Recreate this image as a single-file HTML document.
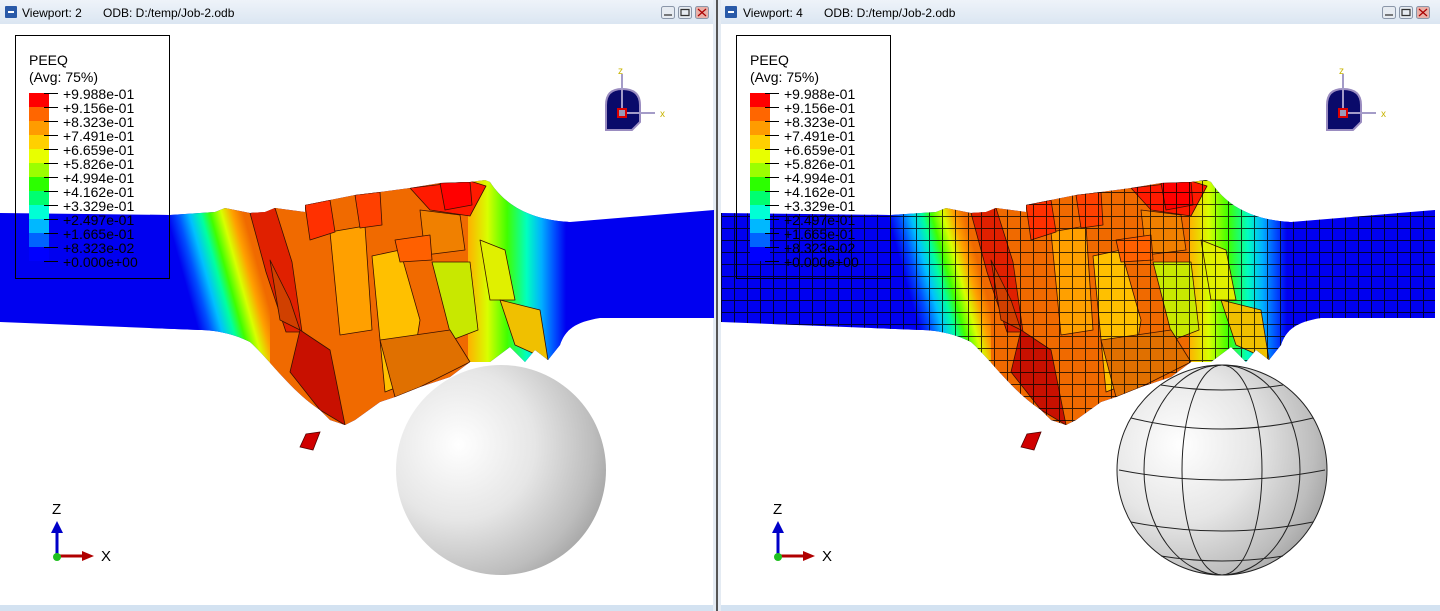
<!DOCTYPE html>
<html><head><meta charset="utf-8"><style>
html,body{margin:0;padding:0;background:#fff;}
svg{display:block;font-family:"Liberation Sans",Arial,sans-serif;}
</style></head><body>
<svg width="1440" height="611" viewBox="0 0 1440 611" xmlns="http://www.w3.org/2000/svg">
<defs>
<linearGradient id="tb" x1="0" y1="0" x2="0" y2="1"><stop offset="0" stop-color="#eef3f9"/><stop offset="1" stop-color="#dbe6f2"/></linearGradient>
<linearGradient id="gL" gradientUnits="userSpaceOnUse" x1="190" y1="300" x2="262" y2="280">
<stop offset="0" stop-color="#0000f0"/><stop offset="0.15" stop-color="#0050ff"/><stop offset="0.3" stop-color="#00c0ff"/><stop offset="0.45" stop-color="#00ffa0"/><stop offset="0.57" stop-color="#40ff00"/><stop offset="0.72" stop-color="#d8ff00"/><stop offset="0.86" stop-color="#ffa000"/><stop offset="1" stop-color="#f06a00"/></linearGradient>
<linearGradient id="gR" gradientUnits="userSpaceOnUse" x1="468" y1="0" x2="566" y2="0">
<stop offset="0" stop-color="#ffb000"/><stop offset="0.2" stop-color="#d8ff00"/><stop offset="0.4" stop-color="#40ff00"/><stop offset="0.6" stop-color="#00ffc0"/><stop offset="0.75" stop-color="#00b0ff"/><stop offset="0.88" stop-color="#0050ff"/><stop offset="1" stop-color="#0000f0"/></linearGradient>
<radialGradient id="sph" cx="0.3" cy="0.38" r="0.8"><stop offset="0" stop-color="#ffffff"/><stop offset="0.45" stop-color="#e6e6e6"/><stop offset="0.8" stop-color="#bdbdbd"/><stop offset="1" stop-color="#9a9a9a"/></radialGradient>
<clipPath id="plateClip"><path id="plateP" d="M0,213 L170,215 L200,213 L215,212 L225,208 L250,213 L265,212 L275,208 L305,212 L305,205 L330,200 L355,195 L380,192 L410,188 L440,183 L470,182 L485,180 L490,182 C505,205 530,220 570,222 L714,210 L714,318 L600,318 C575,322 565,330 560,345 L548,360 L535,350 L525,362 L510,347 L490,362 L470,362 L450,377 L420,387 L395,397 L380,402 L355,420 L345,425 L330,420 L320,410 C290,390 270,360 250,342 C230,332 210,330 200,330 L0,322 Z"/></clipPath>
<clipPath id="vp"><rect x="0" y="24" width="714" height="582"/></clipPath>
<g id="scene">
<g clip-path="url(#plateClip)">
<rect x="0" y="150" width="714" height="300" fill="#0000f0"/>
<rect x="150" y="150" width="130" height="300" fill="url(#gL)"/>
<rect x="270" y="150" width="200" height="300" fill="#f06a00"/>
<rect x="468" y="150" width="100" height="300" fill="url(#gR)"/>
<g stroke="#3a1000" stroke-width="0.8" stroke-linejoin="round">
<path d="M250,213 L275,208 L292,262 L302,332 L286,332 L266,272 Z" fill="#e02000"/>
<path d="M300,330 L330,350 L345,425 L320,410 L290,372 Z" fill="#c81000"/>
<path d="M410,188 L470,181 L486,186 L470,216 L430,210 Z" fill="#ff1a00"/>
<path d="M372,256 L400,250 L420,320 L410,382 L385,392 Z" fill="#ffc000"/>
<path d="M432,262 L470,262 L478,330 L452,340 Z" fill="#c8e800"/>
<path d="M330,232 L365,226 L372,330 L340,335 Z" fill="#ffa000"/>
<path d="M305,205 L330,200 L335,232 L310,240 Z" fill="#ff3000"/>
<path d="M355,195 L380,192 L382,225 L360,228 Z" fill="#ff4000"/>
<path d="M440,183 L470,182 L472,205 L445,210 Z" fill="#ff0000"/>
<path d="M420,210 L460,215 L465,250 L425,255 Z" fill="#f08000"/>
<path d="M480,240 L505,250 L515,300 L490,300 Z" fill="#e0f000"/>
<path d="M500,300 L540,310 L548,360 L515,345 Z" fill="#f0c000"/>
<path d="M380,340 L450,330 L470,362 L420,387 L395,397 Z" fill="#e07000"/>
<path d="M270,260 L290,300 L300,330 L280,320 Z" fill="#d04000"/>
<path d="M395,240 L430,235 L432,260 L400,262 Z" fill="#ff6000"/>
</g>
</g>
<path d="M300,447 L306,434 L320,432 L313,450 Z" fill="#d00000" stroke="#500" stroke-width="0.8"/>
<circle cx="501" cy="470" r="105" fill="url(#sph)"/>
</g>
<g id="legend">
<rect x="15.5" y="35.5" width="154" height="243" fill="none" stroke="#000" stroke-width="1"/>
<text x="29" y="65" font-size="14">PEEQ</text>
<text x="29" y="82" font-size="14">(Avg: 75%)</text>
<rect x="29" y="93" width="20" height="14" fill="#ff0000"/>
<rect x="29" y="107" width="20" height="14" fill="#ff6600"/>
<rect x="29" y="121" width="20" height="14" fill="#ff9c00"/>
<rect x="29" y="135" width="20" height="14" fill="#ffd000"/>
<rect x="29" y="149" width="20" height="14" fill="#e8ff00"/>
<rect x="29" y="163" width="20" height="14" fill="#9cff00"/>
<rect x="29" y="177" width="20" height="14" fill="#2cff00"/>
<rect x="29" y="191" width="20" height="14" fill="#00ff70"/>
<rect x="29" y="205" width="20" height="14" fill="#00ffd5"/>
<rect x="29" y="219" width="20" height="14" fill="#00b8ff"/>
<rect x="29" y="233" width="20" height="14" fill="#0064ff"/>
<rect x="29" y="247" width="20" height="14" fill="#0000ff"/>
<g stroke="#000" stroke-width="1"><path d="M44,93.5H58M44,107.5H58M44,121.5H58M44,135.5H58M44,149.5H58M44,163.5H58M44,177.5H58M44,191.5H58M44,205.5H58M44,219.5H58M44,233.5H58M44,247.5H58M44,261.5H58"/></g>
<g font-size="14">
<text x="63" y="99">+9.988e-01</text><text x="63" y="113">+9.156e-01</text><text x="63" y="127">+8.323e-01</text><text x="63" y="141">+7.491e-01</text><text x="63" y="155">+6.659e-01</text><text x="63" y="169">+5.826e-01</text><text x="63" y="183">+4.994e-01</text><text x="63" y="197">+4.162e-01</text><text x="63" y="211">+3.329e-01</text><text x="63" y="225">+2.497e-01</text><text x="63" y="239">+1.665e-01</text><text x="63" y="253">+8.323e-02</text><text x="63" y="267">+0.000e+00</text>
</g>
<path d="M606,105 Q606,89 622,89 Q640,89 640,105 L640,122 L632,130 L606,130 Z" fill="#0a0a6a" stroke="#9a8cc0" stroke-width="2"/>
<path d="M622,74 V113 H655" stroke="#a49cc8" stroke-width="2" fill="none"/>
<rect x="618" y="109" width="8" height="8" fill="#9a9ab8" stroke="#d00" stroke-width="2"/>
<text x="618" y="74" font-size="10" fill="#c8b400">z</text>
<text x="660" y="117" font-size="10" fill="#c8b400">x</text>
<path d="M57,556 V532" stroke="#0000c8" stroke-width="3"/>
<path d="M51,533 L57,521 L63,533 Z" fill="#0000c8"/>
<path d="M57,556 H83" stroke="#b00000" stroke-width="3"/>
<path d="M82,551 L94,556 L82,561 Z" fill="#b00000"/>
<circle cx="57" cy="557" r="4" fill="#20c020"/>
<text x="52" y="514" font-size="15">Z</text>
<text x="101" y="561" font-size="15">X</text>
</g>
<pattern id="mesh" patternUnits="userSpaceOnUse" width="13" height="12"><path d="M0,0.5H13M0.5,0V12" stroke="#000" stroke-width="1" opacity="0.75"/></pattern>
</defs>

<!-- frame -->
<rect width="1440" height="611" fill="#fff"/>
<rect x="0" y="0" width="1440" height="24" fill="url(#tb)"/>
<rect x="0" y="605" width="1440" height="6" fill="#d3e2f1"/>
<rect x="713" y="0" width="8" height="611" fill="#e4ebf3"/>
<rect x="716" y="0" width="2" height="611" fill="#555"/>

<!-- left panel -->
<g clip-path="url(#vp)"><use href="#scene"/><use href="#legend"/></g>
<!-- right panel -->
<g transform="translate(721,0)">
<g clip-path="url(#vp)">
<use href="#scene"/>
<rect x="0" y="150" width="714" height="300" fill="url(#mesh)" clip-path="url(#plateClip)"/>
<circle cx="501" cy="470" r="105" fill="none" stroke="#222" stroke-width="1"/>
<g stroke="#222" stroke-width="1" fill="none">
<ellipse cx="501" cy="470" rx="40" ry="105"/><ellipse cx="501" cy="470" rx="78" ry="105"/>
<path d="M410,418 Q501,440 592,418M398,470 Q501,490 604,470M410,522 Q501,540 592,522M440,385 Q501,395 562,385M440,556 Q501,566 562,556"/>
</g>
<use href="#legend"/>
</g>
</g>

<!-- titles -->
<g font-size="12" fill="#000">
<rect x="5" y="6" width="12" height="12" fill="#2a5aa8" rx="1"/><rect x="8" y="11" width="6" height="2" fill="#fff"/>
<text x="22" y="17">Viewport: 2</text><text x="103" y="17">ODB: D:/temp/Job-2.odb</text>
<rect x="725" y="6" width="12" height="12" fill="#2a5aa8" rx="1"/><rect x="728" y="11" width="6" height="2" fill="#fff"/>
<text x="743" y="17">Viewport: 4</text><text x="824" y="17">ODB: D:/temp/Job-2.odb</text>
</g>
<g stroke="#8a96a8" fill="#e6ebf1">
<rect x="661.5" y="6.5" width="13" height="12" rx="2"/><rect x="678.5" y="6.5" width="13" height="12" rx="2"/><rect x="695.5" y="6.5" width="13" height="12" rx="2" fill="#e8b0a8"/>
<rect x="1382.5" y="6.5" width="13" height="12" rx="2"/><rect x="1399.5" y="6.5" width="13" height="12" rx="2"/><rect x="1416.5" y="6.5" width="13" height="12" rx="2" fill="#e8b0a8"/>
</g>
<g stroke="#333" stroke-width="1.2" fill="none">
<path d="M664,15H672M681,9.5H689V15.5H681Z"/><path d="M698,9L706,16M706,9L698,16" stroke="#a00"/>
<path d="M1385,15H1393M1402,9.5H1410V15.5H1402Z"/><path d="M1419,9L1427,16M1427,9L1419,16" stroke="#a00"/>
</g>
</svg>
</body></html>
